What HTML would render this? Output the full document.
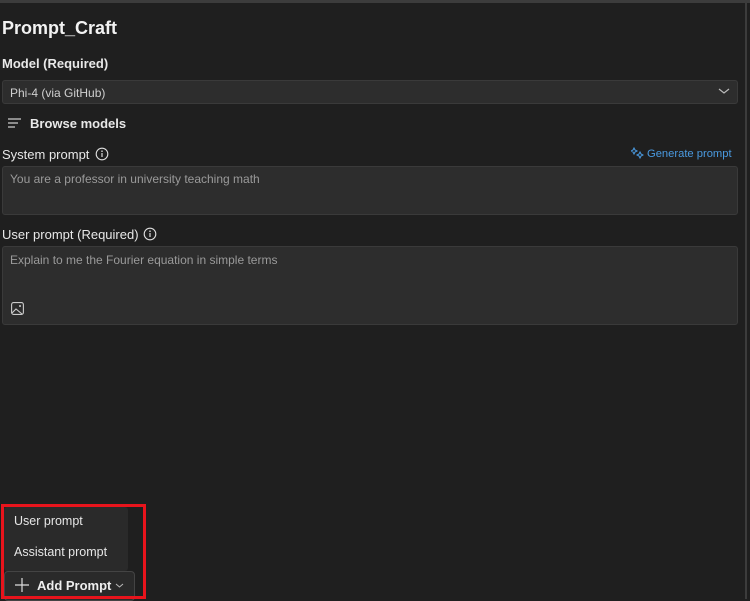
<!DOCTYPE html>
<html><head><style>
*{box-sizing:border-box;margin:0;padding:0}
body{width:750px;height:599px;background:#1f1f1f;font-family:"Liberation Sans",sans-serif;color:#e6e6e6;position:relative;overflow:hidden}
.a{position:absolute}
.lbl{font-size:13px;font-weight:600;color:#e8e8e8}
.box{background:#2d2d2d;border:1px solid #3a3a3a;border-radius:3px}
.ph{font-size:12px;color:#9a9a9a}
</style></head><body>
<div class="a" style="left:0;top:0;width:750px;height:3px;background:#3c3c3c"></div>
<div class="a" style="left:745px;top:0;width:2px;height:599px;background:#3c3c3c"></div>
<div class="a" style="left:2px;top:18px;font-size:18px;font-weight:700;color:#f2f2f2">Prompt_Craft</div>
<div class="a lbl" style="left:2px;top:56px">Model (Required)</div>
<div class="a box" style="left:2px;top:80px;width:736px;height:24px"></div>
<div class="a" style="left:10px;top:86px;font-size:12px;color:#d0d0d0">Phi-4 (via GitHub)</div>
<svg class="a" style="left:718px;top:86px" width="12" height="10"><path d="M1 3l5 4 5-4" stroke="#bbb" fill="none" stroke-width="1.2"/></svg>
<svg class="a" style="left:8px;top:117px" width="14" height="12"><path d="M0 2h13M0 6h10M0 10h7" stroke="#ccc" stroke-width="1.2"/></svg>
<div class="a lbl" style="left:30px;top:116px">Browse models</div>
<div class="a lbl" style="left:2px;top:147px;font-weight:400">System prompt</div>
<svg class="a" style="left:95px;top:147px" width="14" height="14"><circle cx="7" cy="7" r="5.8" stroke="#ddd" fill="none" stroke-width="1.1"/><path d="M7 6v4" stroke="#ddd" stroke-width="1.2"/><circle cx="7" cy="4.2" r=".8" fill="#ddd"/></svg>
<svg class="a" style="left:631px;top:147px" width="13" height="12"><path d="M3 1l1 2 2 1-2 1-1 2-1-2-2-1 2-1zM9 5l1 2 2 1-2 1-1 2-1-2-2-1 2-1z" fill="none" stroke="#4a9ae0" stroke-width="1"/></svg>
<div class="a" style="left:647px;top:148px;font-size:11.2px;color:#4a9ae0">Generate prompt</div>
<div class="a box" style="left:2px;top:166px;width:736px;height:49px"></div>
<div class="a ph" style="left:10px;top:172px">You are a professor in university teaching math</div>
<div class="a lbl" style="left:2px;top:227px;font-weight:400">User prompt (Required)</div>
<svg class="a" style="left:143px;top:227px" width="14" height="14"><circle cx="7" cy="7" r="5.8" stroke="#ddd" fill="none" stroke-width="1.1"/><path d="M7 6v4" stroke="#ddd" stroke-width="1.2"/><circle cx="7" cy="4.2" r=".8" fill="#ddd"/></svg>
<div class="a box" style="left:2px;top:246px;width:736px;height:79px"></div>
<div class="a ph" style="left:10px;top:253px">Explain to me the Fourier equation in simple terms</div>
<svg class="a" style="left:11px;top:302px" width="13" height="13"><rect x=".6" y=".6" width="11.8" height="11.8" rx="2" fill="none" stroke="#ccc" stroke-width="1.1"/><path d="M1 11l4-4 6 5" stroke="#ccc" fill="none" stroke-width="1.1"/><circle cx="9" cy="4" r="1" fill="#ccc"/></svg>
<div class="a" style="left:4px;top:507px;width:124px;height:64px;background:#2a2a2a;border-radius:3px"></div>
<div class="a" style="left:14px;top:514px;font-size:12.5px;color:#e6e6e6">User prompt</div>
<div class="a" style="left:14px;top:545px;font-size:12.5px;color:#e6e6e6">Assistant prompt</div>
<div class="a" style="left:4px;top:571px;width:131px;height:30px;background:#2a2a2a;border:1px solid #444;border-radius:4px"></div>
<svg class="a" style="left:15px;top:578px" width="14" height="14"><path d="M7 0v14M0 7h14" stroke="#ddd" stroke-width="1.2"/></svg>
<div class="a" style="left:37px;top:578px;font-size:13px;font-weight:700;color:#eee">Add Prompt</div>
<svg class="a" style="left:115px;top:582px" width="9" height="7"><path d="M1 2l3.5 3 3.5-3" stroke="#bbb" fill="none"/></svg>
<div class="a" style="left:1px;top:504px;width:145px;height:95px;border:3px solid #e8141c"></div>
</body></html>
